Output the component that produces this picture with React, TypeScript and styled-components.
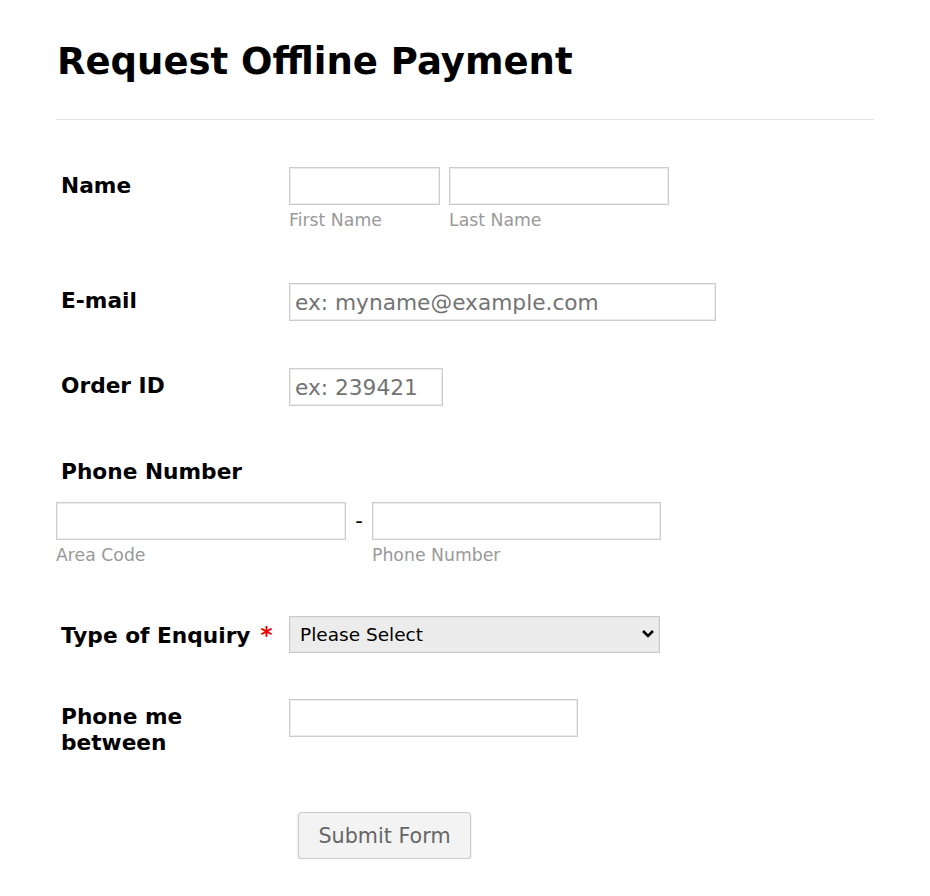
import React from "react";
import styled, { createGlobalStyle } from "styled-components";

const GlobalStyle = createGlobalStyle`
  html, body {
    margin: 0;
    padding: 0;
    background: #fff;
  }
  body {
    font-family: "DejaVu Sans", Verdana, sans-serif;
    color: #000;
  }
`;

const Page = styled.div`
  width: 818px;
  padding: 35px 0 0 56px;
`;

const Title = styled.h1`
  margin: 0;
  padding-left: 1px;
  font-size: 37px;
  font-weight: bold;
  line-height: 54px;
`;

const Divider = styled.hr`
  margin: 30px 0 0;
  border: 0;
  border-top: 1px solid #e3e3e3;
`;

const Form = styled.form`
  display: flex;
  flex-direction: column;
  padding-top: 47px;
`;

const Row = styled.div<{ $gap?: number }>`
  display: flex;
  align-items: flex-start;
  margin-bottom: ${(p) => p.$gap ?? 0}px;
`;

const StackedRow = styled.div<{ $gap?: number }>`
  display: flex;
  flex-direction: column;
  margin-bottom: ${(p) => p.$gap ?? 0}px;
`;

const Label = styled.label<{ $top?: number; $nowrap?: boolean }>`
  width: 205px;
  flex-shrink: 0;
  padding: ${(p) => p.$top ?? 7}px 23px 0 5px;
  font-size: 21.7px;
  font-weight: bold;
  line-height: 26px;
  white-space: ${(p) => (p.$nowrap ? "nowrap" : "normal")};
`;

const StackedLabel = styled(Label)`
  width: auto;
  padding-top: 0;
  margin-bottom: 17px;
`;

const Required = styled.span`
  color: #ee0000;
  margin-left: 10px;
  font-size: 23px;
`;

const Fields = styled.div<{ $gap?: number }>`
  display: flex;
  align-items: flex-start;
  gap: ${(p) => p.$gap ?? 9}px;
`;

const Field = styled.div`
  display: flex;
  flex-direction: column;
`;

const TextInput = styled.input<{ $w: number }>`
  box-sizing: border-box;
  width: ${(p) => p.$w}px;
  height: 38px;
  margin: 0;
  padding: 0 5px;
  border: 1px solid #cdcdcd;
  box-shadow: inset 0 0 0 1px #ececec;
  background: #fff;
  font-family: "DejaVu Sans", Verdana, sans-serif;
  font-size: 21.7px;
  color: #333;
  outline: none;

  &::placeholder {
    color: #737373;
  }
`;

const SubLabel = styled.span`
  margin-top: 4px;
  font-size: 17.3px;
  line-height: 22px;
  color: #999;
`;

const Dash = styled.span`
  width: 26px;
  text-align: center;
  font-size: 21px;
  line-height: 38px;
`;

const SelectBox = styled.div`
  position: relative;
  width: 371px;
  height: 37px;
`;

const Select = styled.select`
  box-sizing: border-box;
  width: 100%;
  height: 100%;
  margin: 0;
  padding: 0 30px 0 10px;
  appearance: none;
  border: 1px solid #cacaca;
  box-shadow: inset 0 0 0 1px #e4e4e4;
  border-radius: 0;
  background: #ececec;
  font-family: "DejaVu Sans", Verdana, sans-serif;
  font-size: 18.5px;
  color: #000;
  outline: none;
`;

const Chevron = styled.svg`
  position: absolute;
  right: 5px;
  top: 12px;
  width: 14px;
  height: 12px;
  pointer-events: none;
`;

const SubmitRow = styled.div`
  padding-left: 242px;
`;

const SubmitButton = styled.button`
  box-sizing: border-box;
  width: 173px;
  height: 47px;
  margin: 0;
  border: 1px solid #cccccc;
  border-radius: 4px;
  background: #f3f3f3;
  box-shadow: 0 1px 2px rgba(0, 0, 0, 0.22);
  font-family: "DejaVu Sans", Verdana, sans-serif;
  font-size: 20.7px;
  color: #666;
  cursor: pointer;
`;

export default function App() {
  return (
    <Page>
      <GlobalStyle />
      <Title>Request Offline Payment</Title>
      <Divider />

      <Form onSubmit={(e) => e.preventDefault()}>
        <Row $gap={52}>
          <Label $top={6}>Name</Label>
          <Fields>
            <Field>
              <TextInput $w={151} />
              <SubLabel>First Name</SubLabel>
            </Field>
            <Field>
              <TextInput $w={220} />
              <SubLabel>Last Name</SubLabel>
            </Field>
          </Fields>
        </Row>

        <Row $gap={47}>
          <Label $top={5}>E-mail</Label>
          <TextInput $w={427} placeholder="ex: myname@example.com" />
        </Row>

        <Row $gap={53}>
          <Label $top={5}>Order ID</Label>
          <TextInput $w={154} placeholder="ex: 239421" />
        </Row>

        <StackedRow $gap={50}>
          <StackedLabel>Phone Number</StackedLabel>
          <Fields $gap={0}>
            <Field>
              <TextInput $w={290} />
              <SubLabel>Area Code</SubLabel>
            </Field>
            <Dash>-</Dash>
            <Field>
              <TextInput $w={289} />
              <SubLabel>Phone Number</SubLabel>
            </Field>
          </Fields>
        </StackedRow>

        <Row $gap={46}>
          <Label $top={6} $nowrap>
            Type of Enquiry<Required>*</Required>
          </Label>
          <SelectBox>
            <Select defaultValue="">
              <option value="">Please Select</option>
              <option value="payment">Payment</option>
              <option value="refund">Refund</option>
              <option value="other">Other</option>
            </Select>
            <Chevron viewBox="0 0 14 12">
              <path d="M2 3l5 5 5-5" fill="none" stroke="#000" strokeWidth="2.6" />
            </Chevron>
          </SelectBox>
        </Row>

        <Row $gap={56}>
          <Label $top={5}>Phone me between</Label>
          <TextInput $w={289} />
        </Row>

        <SubmitRow>
          <SubmitButton type="submit">Submit Form</SubmitButton>
        </SubmitRow>
      </Form>
    </Page>
  );
}
